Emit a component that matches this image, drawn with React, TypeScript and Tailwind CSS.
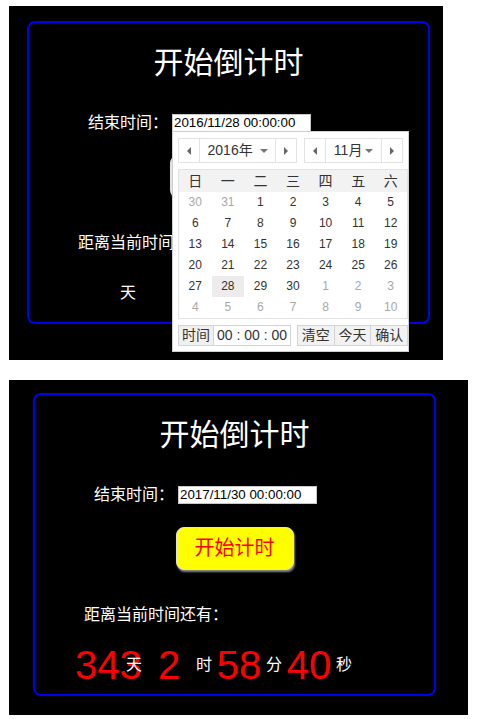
import React from "react";

const FONT = { fontFamily: '"Liberation Sans", "Noto Sans CJK SC", sans-serif' };

function Panel({ date, nums }: { date: string; nums: string[] }) {
  const units = ["天", "时", "分", "秒"];
  return (
    <div className="w-[403px] h-[303px] border-2 border-[#0000ee] rounded-[8px] flex flex-col">
      <div className="mt-[20px] h-[40px] leading-[40px] text-center text-[30px] text-white">开始倒计时</div>
      <div className="mt-[31px] pl-[59px] flex items-center gap-[4px] h-[18px]">
        <span className="text-[16px] text-white leading-[18px]">结束时间：</span>
        <div className="w-[139px] h-[18px] bg-white border border-[#c8c8c8] text-[13.33px] leading-[16px] text-black pl-[1px] whitespace-nowrap">
          {date}
        </div>
      </div>
      <button className="mt-[23px] self-center w-[118px] h-[43px] bg-[#ffff00] rounded-[8px] border border-[#e0e0e0] shadow-[1px_2px_2px_#8a8a8a] text-[20px] text-[#ff0000] leading-[41px]">
        开始计时
      </button>
      <div className="mt-[35px] pl-[49px] h-[20px] leading-[20px] text-[16px] text-white">距离当前时间还有：</div>
      <div className="mt-[17px] pl-[40px] h-[46px] flex items-center gap-[3px]">
        {units.map((u, i) => (
          <React.Fragment key={u}>
            <span className="inline-block w-[48px] h-[46px] text-center text-[40px] leading-[46px] text-[#ff0000] whitespace-nowrap">
              {nums[i]}
            </span>
            <span className="text-[16px] text-white leading-[20px]">{u}</span>
          </React.Fragment>
        ))}
      </div>
    </div>
  );
}

function TriL() {
  return <span className="w-0 h-0 border-y-[4px] border-y-transparent border-r-[4px] border-r-[#666]" />;
}
function TriR() {
  return <span className="w-0 h-0 border-y-[4px] border-y-transparent border-l-[4px] border-l-[#666]" />;
}
function TriD() {
  return <span className="w-0 h-0 border-x-[4px] border-x-transparent border-t-[4px] border-t-[#777]" />;
}

function Calendar() {
  const weeks = ["日", "一", "二", "三", "四", "五", "六"];
  const rows: { d: number; o: boolean }[][] = [];
  const all: { d: number; o: boolean }[] = [
    { d: 30, o: true },
    { d: 31, o: true },
  ];
  for (let i = 1; i <= 30; i++) all.push({ d: i, o: false });
  for (let i = 1; i <= 10; i++) all.push({ d: i, o: true });
  for (let r = 0; r < 6; r++) rows.push(all.slice(r * 7, r * 7 + 7));
  return (
    <div className="absolute left-[163px] top-[125px] w-[237px] h-[221px] bg-white border border-[#cfcfcf] px-[5px] pt-[6px] flex flex-col text-[#333]">
      <div className="flex gap-[7px] h-[25px]">
        <div className="w-[122px] h-[25px] border border-[#e2e2e2] flex">
          <div className="w-[21px] flex items-center justify-center border-r border-[#e2e2e2]"><TriL /></div>
          <div className="flex-1 flex items-center justify-center gap-[7px] text-[14px]">
            <span>2016年</span>
            <TriD />
          </div>
          <div className="w-[21px] flex items-center justify-center border-l border-[#e2e2e2]"><TriR /></div>
        </div>
        <div className="w-[101px] h-[25px] border border-[#e2e2e2] flex">
          <div className="w-[21px] flex items-center justify-center border-r border-[#e2e2e2]"><TriL /></div>
          <div className="flex-1 flex items-center justify-center gap-[3px] text-[14px]">
            <span>11月</span>
            <TriD />
          </div>
          <div className="w-[21px] flex items-center justify-center border-l border-[#e2e2e2]"><TriR /></div>
        </div>
      </div>
      <div className="mt-[6px] w-[230px] border border-[#e2e2e2]">
        <div className="grid grid-cols-7 h-[22px] bg-[#f2f2f2] text-[14px] leading-[22px] text-center">
          {weeks.map((w) => (
            <span key={w}>{w}</span>
          ))}
        </div>
        {rows.map((row, ri) => (
          <div key={ri} className="grid grid-cols-7 h-[21px] text-[12px] leading-[21px] text-center">
            {row.map((c, ci) => (
              <span
                key={ci}
                className={
                  (c.o ? "text-[#a8a8a8] " : "text-[#333] ") +
                  (ri === 4 && ci === 1 ? "bg-[#ececec]" : "")
                }
              >
                {c.d}
              </span>
            ))}
          </div>
        ))}
      </div>
      <div className="mt-[6px] flex justify-between w-[230px] h-[21px] text-[14px] leading-[19px]">
        <div className="w-[113px] flex border border-[#d4d4d4]">
          <span className="w-[35px] bg-[#f0f0f0] border-r border-[#d4d4d4] text-center">时间</span>
          <span className="flex-1 text-center whitespace-pre">00 : 00 : 00</span>
        </div>
        <div className="w-[111px] flex border border-[#d4d4d4] bg-[#f2f2f2]">
          <span className="flex-1 text-center border-r border-[#d4d4d4]">清空</span>
          <span className="flex-1 text-center border-r border-[#d4d4d4]">今天</span>
          <span className="flex-1 text-center">确认</span>
        </div>
      </div>
    </div>
  );
}

export default function App() {
  return (
    <div className="min-h-screen bg-white" style={FONT}>
      <div className="pl-[9px] pt-[6px]">
        <div className="relative w-[434px] h-[354px] bg-black pt-[15px] pl-[18px]">
          <Panel date="2016/11/28 00:00:00" nums={["", "", "", ""]} />
          <Calendar />
        </div>
        <div className="mt-[20px] w-[459px] h-[335px] bg-black pt-[13px] pl-[24px]">
          <Panel date="2017/11/30 00:00:00" nums={["343", "2", "58", "40"]} />
        </div>
      </div>
    </div>
  );
}
